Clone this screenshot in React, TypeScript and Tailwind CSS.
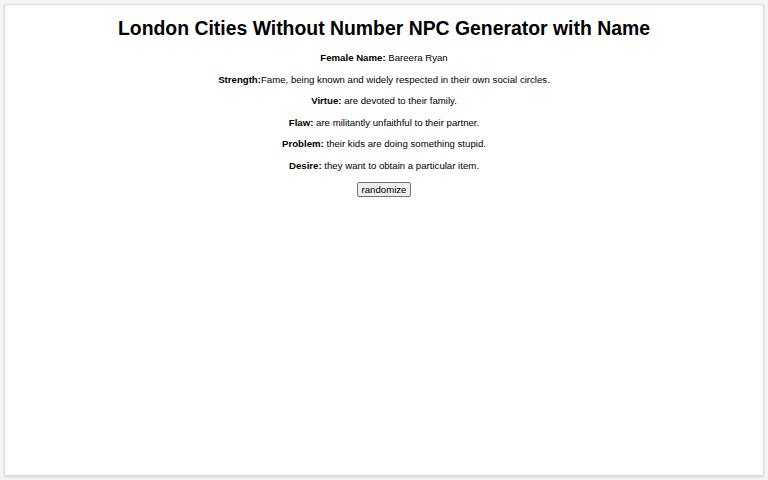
export default function App() {
  const rows: [string, string][] = [
    ["Female Name:", " Bareera Ryan"],
    ["Strength:", "Fame, being known and widely respected in their own social circles."],
    ["Virtue:", " are devoted to their family."],
    ["Flaw:", " are militantly unfaithful to their partner."],
    ["Problem:", " their kids are doing something stupid."],
    ["Desire:", " they want to obtain a particular item."],
  ];
  return (
    <div className="h-[480px] bg-[#f4f4f4] p-[4px] font-['Liberation_Sans',Arial,sans-serif] text-black">
      <div className="h-[472px] bg-white border border-[#dcdcdc] shadow-[0_1px_2px_rgba(0,0,0,0.12)] px-[10px] pt-[12px] text-center">
        <h1 className="text-[19.4px] leading-[23px] font-bold mb-[12px]">
          London Cities Without Number NPC Generator with Name
        </h1>
        {rows.map(([k, v]) => (
          <p key={k} className="text-[9.65px] leading-[11.6px] mb-[10px] whitespace-pre">
            <b>{k}</b>
            {v}
          </p>
        ))}
        <button className="block mx-auto text-[9.65px] leading-[11px] px-[4px] py-[1px] border border-[#767676] rounded-[2px] bg-[#efefef] text-black">
          randomize
        </button>
      </div>
    </div>
  );
}
